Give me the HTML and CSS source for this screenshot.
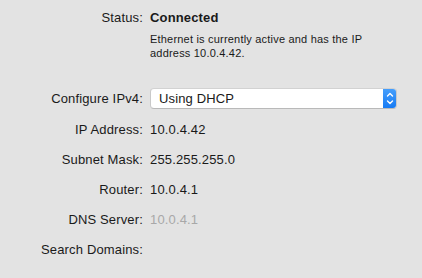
FILE: index.html
```html
<!DOCTYPE html>
<html>
<head>
<meta charset="utf-8">
<link rel="stylesheet" href="styles.css">
</head>
<body>
<div class="panel">
  <div class="row status">
    <div class="label">Status:</div>
    <div class="value bold">Connected</div>
  </div>
  <div class="row desc">
    <div></div>
    <div class="note">Ethernet is currently active and has the IP<br>address 10.0.4.42.</div>
  </div>
  <div class="row configure">
    <div class="label">Configure IPv4:</div>
    <div class="select">
      <span class="select-text">Using DHCP</span>
      <span class="stepper">
        <svg width="14" height="21" viewBox="0 0 14 21">
          <path d="M4.5 8 L7 5.5 L9.5 8" fill="none" stroke="#fff" stroke-width="1.4" stroke-linecap="round" stroke-linejoin="round"/>
          <path d="M4.5 13 L7 15.5 L9.5 13" fill="none" stroke="#fff" stroke-width="1.4" stroke-linecap="round" stroke-linejoin="round"/>
        </svg>
      </span>
    </div>
  </div>
  <div class="row field first">
    <div class="label">IP Address:</div>
    <div class="value">10.0.4.42</div>
  </div>
  <div class="row field">
    <div class="label">Subnet Mask:</div>
    <div class="value">255.255.255.0</div>
  </div>
  <div class="row field">
    <div class="label">Router:</div>
    <div class="value">10.0.4.1</div>
  </div>
  <div class="row field">
    <div class="label">DNS Server:</div>
    <div class="value muted">10.0.4.1</div>
  </div>
  <div class="row field">
    <div class="label">Search Domains:</div>
    <div class="value"></div>
  </div>
</div>
</body>
</html>
```
FILE: styles.css
```css
html, body {
  margin: 0;
  padding: 0;
  background: #e3e3e3;
}
body {
  width: 422px;
  height: 278px;
  overflow: hidden;
  font-family: "Liberation Sans", Arial, sans-serif;
  font-size: 13px;
  letter-spacing: 0.15px;
  color: #1a1a1a;
}
.panel {
  display: flex;
  flex-direction: column;
}
.row {
  display: grid;
  grid-template-columns: 143px 1fr;
  column-gap: 7px;
  align-items: center;
  line-height: 16px;
}
.label {
  text-align: right;
  white-space: nowrap;
}
.status {
  margin-top: 10px;
}
.bold {
  font-weight: bold;
}
.desc {
  margin-top: 6px;
}
.note {
  font-size: 11px;
  line-height: 14px;
  letter-spacing: 0.2px;
}
.configure {
  margin-top: 28px;
}
.select {
  width: 247px;
  height: 21px;
  box-sizing: border-box;
  background: #fff;
  border: 1px solid #c9c9c9;
  border-top-color: #d2d2d2;
  border-bottom-color: #b9b9b9;
  border-radius: 4px;
  display: flex;
  align-items: center;
  justify-content: space-between;
  overflow: hidden;
}
.select-text {
  padding-left: 8px;
  line-height: 19px;
}
.stepper {
  width: 14px;
  height: 21px;
  margin: -1px -1px -1px 0;
  background: linear-gradient(#48a0fc, #1479f3);
  border-radius: 0 4px 4px 0;
  display: flex;
}
.field {
  margin-top: 14px;
}
.field.first {
  margin-top: 13px;
}
.muted {
  color: #a8a8a8;
}
```
